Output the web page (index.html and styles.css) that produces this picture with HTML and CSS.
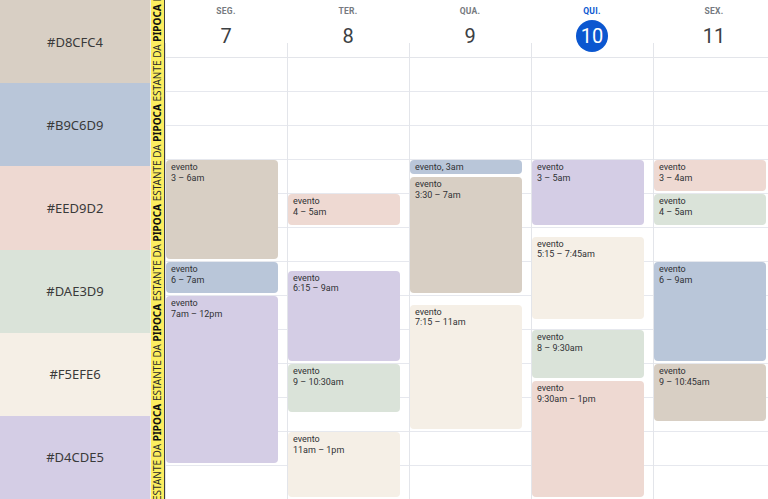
FILE: index.html
```html
<!DOCTYPE html>
<html lang="pt-BR">
<head>
  <meta charset="UTF-8" />
  <meta name="viewport" content="width=device-width, initial-scale=1.0"/>
  <title>Paleta da semana</title>
  <link rel="stylesheet" href="styles.css">
</head>
<body>
  <div class="page">
    <aside class="swatches">
      <div class="swatch sand">#D8CFC4</div>
      <div class="swatch blue">#B9C6D9</div>
      <div class="swatch rose">#EED9D2</div>
      <div class="swatch sage">#DAE3D9</div>
      <div class="swatch cream">#F5EFE6</div>
      <div class="swatch lilac">#D4CDE5</div>
    </aside>

    <div class="strip">
      <span class="strip-text">ESTANTE DA <b>PIPOCA</b> ESTANTE DA <b>PIPOCA</b> ESTANTE DA <b>PIPOCA</b> ESTANTE DA <b>PIPOCA</b> ESTANTE DA <b>PIPOCA</b> ESTANTE DA <b>PIPOCA</b></span>
    </div>

    <main class="calendar">
      <div class="week-head">
        <div class="day-head"><span class="dow">SEG.</span><span class="date">7</span></div>
        <div class="day-head"><span class="dow">TER.</span><span class="date">8</span></div>
        <div class="day-head"><span class="dow">QUA.</span><span class="date">9</span></div>
        <div class="day-head today"><span class="dow">QUI.</span><span class="date">10</span></div>
        <div class="day-head"><span class="dow">SEX.</span><span class="date">11</span></div>
      </div>
      <div class="week-body">
        <div class="day-col"></div>
        <div class="day-col"></div>
        <div class="day-col"></div>
        <div class="day-col"></div>
        <div class="day-col"></div>
      </div>
    </main>
  </div>

  <script>
    const HOUR = 34;

    // [start, end, colour, time label]
    const week = [
      [[3, 6, "sand", "3 – 6am"], [6, 7, "blue", "6 – 7am"], [7, 12, "lilac", "7am – 12pm"]],
      [[4, 5, "rose", "4 – 5am"], [6.25, 9, "lilac", "6:15 – 9am"], [9, 10.5, "sage", "9 – 10:30am"], [11, 13, "cream", "11am – 1pm"]],
      [[3, 3.5, "blue", "3am"], [3.5, 7, "sand", "3:30 – 7am"], [7.25, 11, "cream", "7:15 – 11am"]],
      [[3, 5, "lilac", "3 – 5am"], [5.25, 7.75, "cream", "5:15 – 7:45am"], [8, 9.5, "sage", "8 – 9:30am"], [9.5, 13, "rose", "9:30am – 1pm"]],
      [[3, 4, "rose", "3 – 4am"], [4, 5, "sage", "4 – 5am"], [6, 9, "blue", "6 – 9am"], [9, 10.75, "sand", "9 – 10:45am"]]
    ];

    const cols = document.querySelectorAll(".day-col");

    week.forEach((events, i) => {
      events.forEach(([start, end, tone, time]) => {
        const ev = document.createElement("div");
        ev.className = `event ${tone}`;
        ev.style.top = `${start * HOUR}px`;
        ev.style.height = `${(end - start) * HOUR - 3}px`;
        if (end - start < 1) {
          ev.textContent = `evento, ${time}`;
        } else {
          ev.innerHTML = `<div>evento</div><div>${time}</div>`;
        }
        cols[i].appendChild(ev);
      });
    });
  </script>
</body>
</html>
```

FILE: styles.css
```css
body {
  margin: 0;
  padding: 0;
  background-color: #ffffff;
  font-family: Roboto, "Liberation Sans", sans-serif;
  color: #3c4043;
  overflow: hidden;
}

.page {
  display: flex;
  height: 499px;
  overflow: hidden;
}

/* colour tones, shared by swatches and events */
.sand { background-color: #d8cfc4; }
.blue { background-color: #b9c6d9; }
.rose { background-color: #eed9d2; }
.sage { background-color: #dae3d9; }
.cream { background-color: #f5efe6; }
.lilac { background-color: #d4cde5; }

.swatches {
  width: 150px;
  flex-shrink: 0;
  display: flex;
  flex-direction: column;
}

.swatch {
  flex: 1;
  display: flex;
  align-items: center;
  justify-content: center;
  font-family: "Noto Sans", sans-serif;
  font-size: 13px;
  color: #3a3a3a;
}

.strip {
  width: 13px;
  flex-shrink: 0;
  background-color: #fcee60;
  border-left: 1px solid #3d3d3d;
  border-right: 1px solid #ececec;
  overflow: hidden;
  writing-mode: vertical-rl;
  transform: rotate(180deg);
}

.strip-text {
  display: block;
  white-space: nowrap;
  font-family: "Noto Sans", sans-serif;
  font-size: 10px;
  line-height: 13px;
  color: #2a2a2a;
  text-indent: -2px;
}

.strip-text b {
  font-weight: 700;
  color: #111111;
}

.calendar {
  flex: 1;
  overflow: hidden;
}

.week-head,
.week-body {
  display: grid;
  grid-template-columns: repeat(5, 122px);
}

.week-head {
  height: 58px;
  box-sizing: border-box;
  border-bottom: 1px solid #e3e5ea;
}

.day-head {
  display: flex;
  flex-direction: column;
  align-items: center;
  padding-top: 7px;
  background: linear-gradient(#e3e5ea, #e3e5ea) left bottom / 1px 14px no-repeat;
}

.dow {
  font-size: 8.5px;
  line-height: 9px;
  font-weight: 700;
  letter-spacing: 0.3px;
  color: #767a80;
}

.date {
  margin-top: 4px;
  width: 32px;
  height: 32px;
  line-height: 32px;
  border-radius: 50%;
  text-align: center;
  font-size: 20px;
  color: #3c4043;
}

.today .dow {
  color: #0b57d0;
}

.today .date {
  background-color: #0b57d0;
  color: #ffffff;
}

.day-col {
  position: relative;
  height: 476px;
  border-left: 1px solid #e3e5ea;
  background-image: repeating-linear-gradient(to bottom, transparent 0 33px, #e6e8ee 33px 34px);
}

.event {
  position: absolute;
  left: 0;
  width: 112px;
  box-sizing: border-box;
  padding: 2px 4px 0 5px;
  border-radius: 4px;
  font-size: 9px;
  line-height: 10.5px;
  color: #303134;
  overflow: hidden;
}
```
